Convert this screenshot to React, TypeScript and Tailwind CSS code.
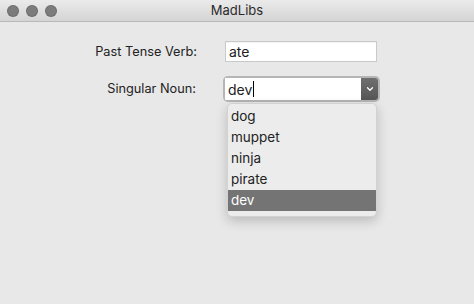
import { ChevronDown } from "lucide-react";

const nouns = ["dog", "muppet", "ninja", "pirate", "dev"];

function TrafficLight() {
  return <span className="h-[12px] w-[12px] rounded-full bg-[#7c7c7c] shadow-[inset_0_0_0_1px_rgba(0,0,0,0.12)]" />;
}

export default function App() {
  return (
    <div
      className="relative h-[304px] w-[474px] overflow-hidden bg-[#e8e8e8] text-[#222]"
      style={{ fontFamily: "Inter, 'Noto Sans', sans-serif" }}
    >
      {/* title bar */}
      <div className="relative flex h-[22px] items-center border-b border-[#b9b9b9] bg-gradient-to-b from-[#ebebeb] to-[#d4d4d4]">
        <div className="flex gap-[7px] pl-[7px]">
          <TrafficLight />
          <TrafficLight />
          <TrafficLight />
        </div>
        <div className="absolute inset-0 flex items-center justify-center text-[13px] text-[#2a2a2a]">MadLibs</div>
      </div>

      <div className="flex flex-col gap-[16px] pt-[19px]">
        <div className="flex items-center">
          <label className="w-[197px] text-right text-[12.75px]">Past Tense Verb:</label>
          <div className="ml-[28px] flex h-[21px] w-[152px] items-center border border-[#c9c9c9] bg-white px-[3px] text-[14px] shadow-[inset_0_1px_0_rgba(0,0,0,0.05)]">
            ate
          </div>
        </div>

        <div className="flex items-center">
          <label className="w-[196px] text-right text-[12.75px]">Singular Noun:</label>
          <div className="ml-[29px] flex h-[22px] w-[153px] rounded-[3px] shadow-[0_0_0_2px_rgba(120,120,120,0.45)]">
            <div className="flex flex-1 items-center bg-white pl-[3px] text-[14px]">
              dev
              <span className="ml-[1px] h-[16px] w-px bg-black" />
            </div>
            <div className="flex w-[17px] items-center justify-center rounded-r-[3px] bg-gradient-to-b from-[#6f6f6f] to-[#565656]">
              <ChevronDown size={10} strokeWidth={3} className="text-white" />
            </div>
          </div>
        </div>
      </div>

      {/* popup list */}
      <div className="absolute left-[227px] top-[103px] w-[150px] rounded-[5px] border border-[#d2d2d2] bg-[#ececec] pb-[5px] pt-[2px] shadow-[0_4px_12px_rgba(0,0,0,0.2)]">
        {nouns.map((n) => (
          <div
            key={n}
            className={
              n === "dev"
                ? "flex h-[21px] items-center bg-[#747474] pl-[3px] text-[13.5px] text-white"
                : "flex h-[21px] items-center pl-[3px] text-[13.5px] text-[#222]"
            }
          >
            {n}
          </div>
        ))}
      </div>
    </div>
  );
}
